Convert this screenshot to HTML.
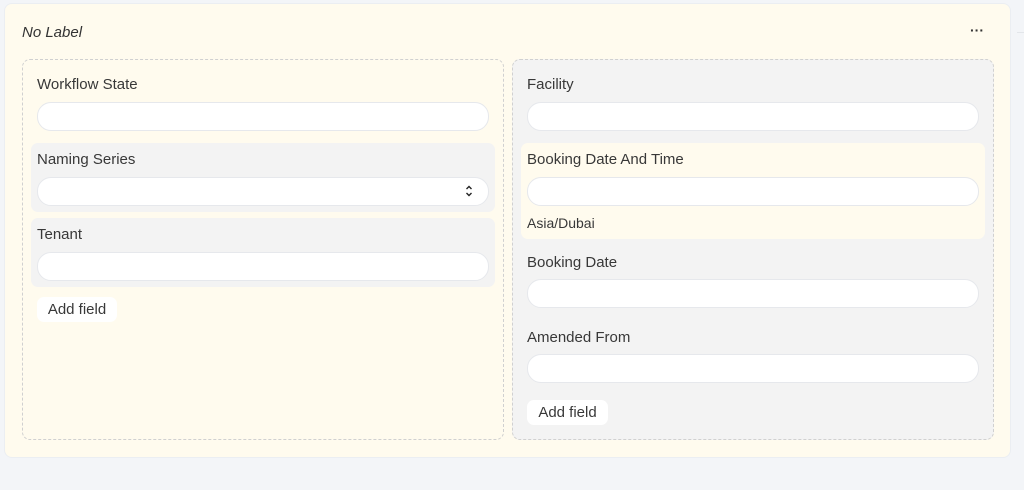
<!DOCTYPE html>
<html><head><style>
*{box-sizing:border-box;margin:0;padding:0}
body{width:1024px;height:490px;background:#f3f5f8;font-family:"Liberation Sans",sans-serif;color:#333;position:relative;overflow:hidden}
.a{position:absolute}
.card{left:4px;top:3px;width:1007px;height:455px;background:#fffbee;border:1px solid #ebeef2;border-radius:8px}
.col{border:1px dashed #d0d0d0;border-radius:8px}
.lbl{font-size:15px;color:#383838}
.inp{background:#fff;border:1px solid #e6e8ec;border-radius:14px;height:29px}
.blk{border-radius:7px}
.btn{background:#fff;border-radius:7px;font-size:15px;color:#383838;text-align:center;line-height:25px;height:25px}
</style></head><body>
<div class="a" style="left:1017px;top:32px;width:7px;border-top:1px solid #e3e6ea"></div>
<div class="a card"></div>
<div class="a" style="left:22px;top:24px;font-size:15px;font-style:italic;color:#333">No Label</div>
<div class="a" style="left:970px;top:22px;font-size:14px;font-weight:bold;color:#333">···</div>

<div class="a col" style="left:22px;top:59px;width:482px;height:381px;background:#fffbee"></div>
<div class="a lbl" style="left:37px;top:76px">Workflow State</div>
<div class="a inp" style="left:37px;top:102px;width:452px"></div>
<div class="a blk" style="left:31px;top:143px;width:464px;height:69px;background:#f3f3f3"></div>
<div class="a lbl" style="left:37px;top:151px">Naming Series</div>
<div class="a inp" style="left:37px;top:177px;width:452px"></div>
<svg class="a" style="left:464px;top:184px" width="10" height="14" viewBox="0 0 10 14"><path d="M2.5 5 L5 2.5 L7.5 5 M2.5 9 L5 11.5 L7.5 9" fill="none" stroke="#222" stroke-width="1.4"/></svg>
<div class="a blk" style="left:31px;top:218px;width:464px;height:69px;background:#f3f3f3"></div>
<div class="a lbl" style="left:37px;top:226px">Tenant</div>
<div class="a inp" style="left:37px;top:252px;width:452px"></div>
<div class="a btn" style="left:37px;top:297px;width:80px">Add field</div>

<div class="a col" style="left:512px;top:59px;width:482px;height:381px;background:#f3f3f3"></div>
<div class="a lbl" style="left:527px;top:76px">Facility</div>
<div class="a inp" style="left:527px;top:102px;width:452px"></div>
<div class="a blk" style="left:521px;top:143px;width:464px;height:96px;background:#fffbee"></div>
<div class="a lbl" style="left:527px;top:151px">Booking Date And Time</div>
<div class="a inp" style="left:527px;top:177px;width:452px"></div>
<div class="a" style="left:527px;top:215px;font-size:14px;color:#383838">Asia/Dubai</div>
<div class="a lbl" style="left:527px;top:254px">Booking Date</div>
<div class="a inp" style="left:527px;top:279px;width:452px"></div>
<div class="a lbl" style="left:527px;top:329px">Amended From</div>
<div class="a inp" style="left:527px;top:354px;width:452px"></div>
<div class="a btn" style="left:527px;top:400px;width:81px">Add field</div>
</body></html>
